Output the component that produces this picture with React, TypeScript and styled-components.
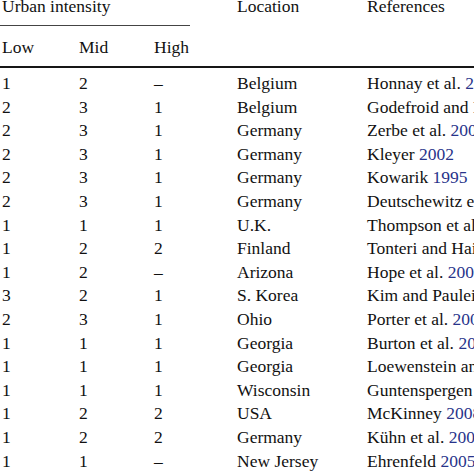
import styled, { createGlobalStyle } from 'styled-components';

const GlobalStyle = createGlobalStyle`
  html, body {
    margin: 0;
    padding: 0;
    background: #ffffff;
    overflow: hidden;
  }
  body {
    width: 474px;
    height: 474px;
  }
`;

type Row = {
  low: string;
  mid: string;
  high: string;
  location: string;
  authors: string;
  year: string;
};

const rows: Row[] = [
  { low: '1', mid: '2', high: '–', location: 'Belgium', authors: 'Honnay et al.', year: '2003' },
  { low: '2', mid: '3', high: '1', location: 'Belgium', authors: 'Godefroid and Koedam', year: '2007' },
  { low: '2', mid: '3', high: '1', location: 'Germany', authors: 'Zerbe et al.', year: '2003' },
  { low: '2', mid: '3', high: '1', location: 'Germany', authors: 'Kleyer', year: '2002' },
  { low: '2', mid: '3', high: '1', location: 'Germany', authors: 'Kowarik', year: '1995' },
  { low: '2', mid: '3', high: '1', location: 'Germany', authors: 'Deutschewitz et al.', year: '2003' },
  { low: '1', mid: '1', high: '1', location: 'U.K.', authors: 'Thompson et al.', year: '2003' },
  { low: '1', mid: '2', high: '2', location: 'Finland', authors: 'Tonteri and Haila', year: '1990' },
  { low: '1', mid: '2', high: '–', location: 'Arizona', authors: 'Hope et al.', year: '2003' },
  { low: '3', mid: '2', high: '1', location: 'S. Korea', authors: 'Kim and Pauleit', year: '2007' },
  { low: '2', mid: '3', high: '1', location: 'Ohio', authors: 'Porter et al.', year: '2001' },
  { low: '1', mid: '1', high: '1', location: 'Georgia', authors: 'Burton et al.', year: '2005' },
  { low: '1', mid: '1', high: '1', location: 'Georgia', authors: 'Loewenstein and Loewenstein', year: '2005' },
  { low: '1', mid: '1', high: '1', location: 'Wisconsin', authors: 'Guntenspergen and Levenson', year: '1997' },
  { low: '1', mid: '2', high: '2', location: 'USA', authors: 'McKinney', year: '2008' },
  { low: '1', mid: '2', high: '2', location: 'Germany', authors: 'Kühn et al.', year: '2004' },
  { low: '1', mid: '1', high: '–', location: 'New Jersey', authors: 'Ehrenfeld', year: '2005' },
];

export default function App() {
  return (
    <>
      <GlobalStyle />
      <Table>
        <Head>
          <UrbanCell>
            <UrbanLabel>Urban intensity</UrbanLabel>
          </UrbanCell>
          <TallHeadCell>Location</TallHeadCell>
          <TallHeadCell>References</TallHeadCell>
          <SubHeadCell>Low</SubHeadCell>
          <SubHeadCell>Mid</SubHeadCell>
          <SubHeadCell>High</SubHeadCell>
        </Head>
        <Body>
          {rows.map((r, i) => (
            <BodyRow key={i}>
              <Cell>{r.low}</Cell>
              <Cell>{r.mid}</Cell>
              <Cell>{r.high}</Cell>
              <Cell>{r.location}</Cell>
              <Cell>
                {r.authors} <Year>{r.year}</Year>
              </Cell>
            </BodyRow>
          ))}
        </Body>
      </Table>
    </>
  );
}

const columns = '77px 75px 83px 130px 1fr';

const Table = styled.div`
  margin-top: -6px;
  padding-left: 2px;
  font-family: 'Liberation Serif', 'Times New Roman', serif;
  font-size: 17.5px;
  color: #111111;
  white-space: nowrap;
`;

const Head = styled.div`
  display: grid;
  grid-template-columns: ${columns};
  grid-template-rows: 33px 39px;
  border-bottom: 2px solid #161616;
  margin-left: -2px;
  padding-left: 2px;
`;

const UrbanCell = styled.div`
  grid-column: 1 / 4;
  grid-row: 1;
  margin-left: -2px;
`;

const UrbanLabel = styled.div`
  width: 190px;
  height: 32px;
  line-height: 24px;
  padding-left: 2px;
  box-sizing: border-box;
  border-bottom: 1px solid #444444;
`;

const TallHeadCell = styled.div`
  grid-row: 1 / 3;
  line-height: 24px;
`;

const SubHeadCell = styled.div`
  grid-row: 2;
  line-height: 24px;
  padding-top: 8px;
`;

const Body = styled.div`
  padding-top: 4px;
`;

const BodyRow = styled.div`
  display: grid;
  grid-template-columns: ${columns};
  height: 23.6px;
  line-height: 23.6px;
`;

const Cell = styled.div`
  overflow: visible;
`;

const Year = styled.span`
  color: #27338a;
`;
